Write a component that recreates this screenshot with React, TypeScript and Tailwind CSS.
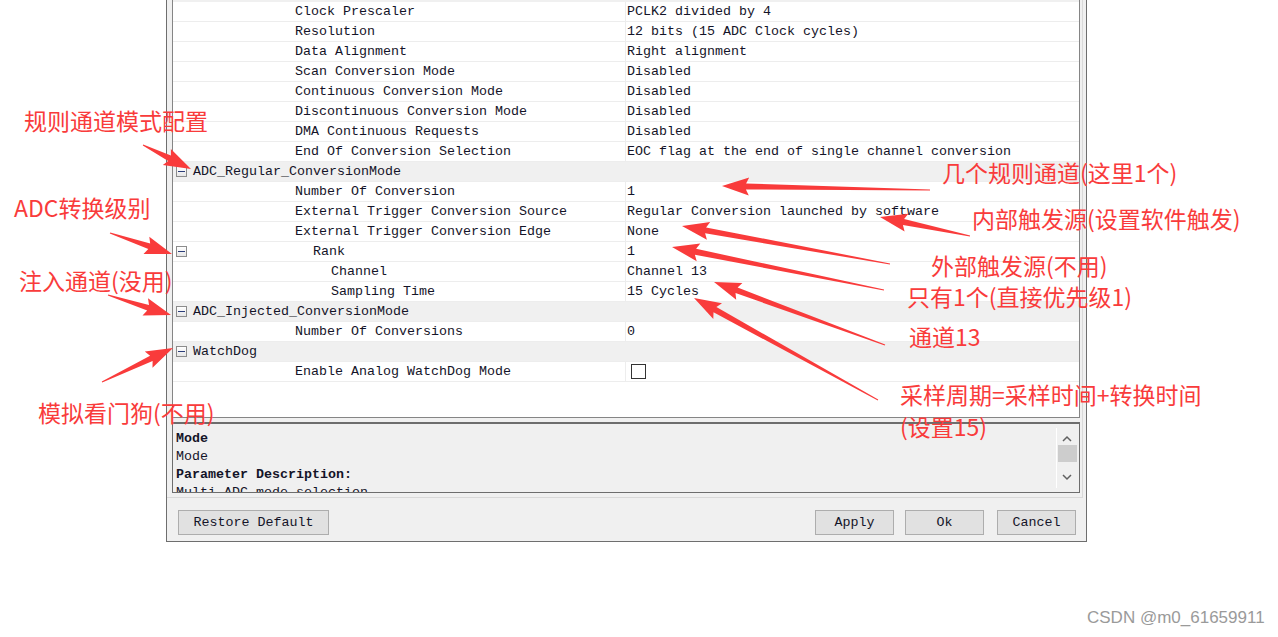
import React from 'react';

type Row = {
  label: string;
  indent: number;
  value?: string;
  group?: boolean;
  toggle?: boolean;
  checkbox?: boolean;
};

const rows: Row[] = [
  { label: 'Clock Prescaler', indent: 122, value: 'PCLK2 divided by 4' },
  { label: 'Resolution', indent: 122, value: '12 bits (15 ADC Clock cycles)' },
  { label: 'Data Alignment', indent: 122, value: 'Right alignment' },
  { label: 'Scan Conversion Mode', indent: 122, value: 'Disabled' },
  { label: 'Continuous Conversion Mode', indent: 122, value: 'Disabled' },
  { label: 'Discontinuous Conversion Mode', indent: 122, value: 'Disabled' },
  { label: 'DMA Continuous Requests', indent: 122, value: 'Disabled' },
  { label: 'End Of Conversion Selection', indent: 122, value: 'EOC flag at the end of single channel conversion' },
  { label: 'ADC_Regular_ConversionMode', indent: 20, group: true, toggle: true },
  { label: 'Number Of Conversion', indent: 122, value: '1' },
  { label: 'External Trigger Conversion Source', indent: 122, value: 'Regular Conversion launched by software' },
  { label: 'External Trigger Conversion Edge', indent: 122, value: 'None' },
  { label: 'Rank', indent: 140, value: '1', toggle: true },
  { label: 'Channel', indent: 158, value: 'Channel 13' },
  { label: 'Sampling Time', indent: 158, value: '15 Cycles' },
  { label: 'ADC_Injected_ConversionMode', indent: 20, group: true, toggle: true },
  { label: 'Number Of Conversions', indent: 122, value: '0' },
  { label: 'WatchDog', indent: 20, group: true, toggle: true },
  { label: 'Enable Analog WatchDog Mode', indent: 122, checkbox: true },
];

// annotation arrows: tail -> tip
const arrows: [number, number, number, number][] = [
  [143, 145, 191, 169],
  [110, 233, 172, 254],
  [108, 295, 171, 315],
  [102, 382, 173, 348],
  [930, 190, 722, 186],
  [970, 236, 880, 217],
  [890, 264, 682, 226],
  [884, 290, 672, 247],
  [885, 345, 714, 282],
  [878, 400, 694, 298],
];

const notes: { text: string; x: number; y: number }[] = [
  { text: '规则通道模式配置', x: 24, y: 121 },
  { text: 'ADC转换级别', x: 14, y: 208 },
  { text: '注入通道(没用)', x: 19, y: 281 },
  { text: '模拟看门狗(不用)', x: 38, y: 413 },
  { text: '几个规则通道(这里1个)', x: 942, y: 173 },
  { text: '内部触发源(设置软件触发)', x: 972, y: 219 },
  { text: '外部触发源(不用)', x: 931, y: 266 },
  { text: '只有1个(直接优先级1)', x: 907, y: 297 },
  { text: '通道13', x: 909, y: 337 },
  { text: '采样周期=采样时间+转换时间', x: 900, y: 395 },
  { text: '(设置15)', x: 900, y: 427 },
];

function arrowPoints(x1: number, y1: number, x2: number, y2: number) {
  const dx = x2 - x1;
  const dy = y2 - y1;
  const len = Math.sqrt(dx * dx + dy * dy);
  const ux = dx / len;
  const uy = dy / len;
  const nx = -uy;
  const ny = ux;
  const head = 24;
  const bx = x2 - ux * head;
  const by = y2 - uy * head;
  const pts: [number, number][] = [
    [x1 + nx * 0.5, y1 + ny * 0.5],
    [bx + nx * 3, by + ny * 3],
    [bx + nx * 9 - ux * 3, by + ny * 9 - uy * 3],
    [x2, y2],
    [bx - nx * 9 - ux * 3, by - ny * 9 - uy * 3],
    [bx - nx * 3, by - ny * 3],
    [x1 - nx * 0.5, y1 - ny * 0.5],
  ];
  return pts.map((p) => `${p[0].toFixed(1)},${p[1].toFixed(1)}`).join(' ');
}

function Toggle() {
  return (
    <span className="absolute left-[3px] top-[4px] w-[11px] h-[11px] border border-[#8c8c8c] bg-gradient-to-b from-white to-[#e6e6e6] flex items-center justify-center">
      <span className="block w-[7px] h-[1px] bg-[#2c3e7a]" />
    </span>
  );
}

function Btn({ label, w }: { label: string; w: string }) {
  return (
    <button className={`${w} h-[25px] bg-[#e1e1e1] border border-[#adadad] text-[13.33px] text-[#141428] leading-none`}>
      {label}
    </button>
  );
}

export default function App() {
  return (
    <div className="relative w-[1278px] h-[637px] bg-white overflow-hidden font-['Liberation_Mono',monospace]">
      <div className="ml-[166px] w-[921px] h-[542px] bg-[#f0f0f0] border-x border-b border-[#6e6e6e] flex flex-col">
        <div className="w-[916px] h-[498px] border-r border-b border-[#d9d9d9] pl-[5px] pr-[2px] flex flex-col">
          {/* property table */}
          <div className="w-[908px] h-[418px] bg-white border-x border-b border-[#858585] text-[13.33px] text-[#141428]">
            <div className="h-[2px] bg-[#f0f0f0]" />
            {rows.map((r, i) => (
              <div
                key={i}
                className={`relative h-[20px] flex border-b border-[#ededed] ${r.group ? 'bg-[#f0f0f0]' : ''}`}
              >
                {r.toggle && <Toggle />}
                <div className="w-[452px] shrink-0 leading-[19px] whitespace-pre" style={{ paddingLeft: r.indent }}>
                  {r.label}
                </div>
                <div className={`flex-1 leading-[19px] pl-[1px] whitespace-pre ${r.group ? '' : 'border-l border-[#ededed]'}`}>
                  {r.checkbox ? (
                    <span className="block ml-[4px] mt-[2px] w-[15px] h-[15px] border border-[#333] bg-white" />
                  ) : (
                    r.value
                  )}
                </div>
              </div>
            ))}
          </div>

          {/* description */}
          <div className="mt-[4px] w-[908px] h-[71px] border-t-2 border-x border-b border-[#6d6d6d] bg-[#f0f0f0] flex">
            <div className="flex-1 overflow-hidden pl-[3px] pt-[6px] text-[13.33px] leading-[18px] text-[#141428]">
              <div className="font-bold">Mode</div>
              <div>Mode</div>
              <div className="font-bold">Parameter Description:</div>
              <div>Multi ADC mode selection</div>
            </div>
            <div className="w-[21px] mr-[2px] my-[4px] border-l border-white flex flex-col items-center">
              <svg width="12" height="8" viewBox="0 0 12 8" className="mt-[7px]">
                <path d="M2 6 L6 2 L10 6" fill="none" stroke="#606060" strokeWidth="1.5" />
              </svg>
              <div className="mt-[2px] w-[19px] h-[17px] bg-[#cdcdcd]" />
              <svg width="12" height="8" viewBox="0 0 12 8" className="mt-[11px]">
                <path d="M2 2 L6 6 L10 2" fill="none" stroke="#606060" strokeWidth="1.5" />
              </svg>
            </div>
          </div>
        </div>

        {/* footer buttons */}
        <div className="flex items-start pt-[12px] pl-[11px] pr-[10px]">
          <Btn label="Restore Default" w="w-[151px]" />
          <div className="flex-1" />
          <Btn label="Apply" w="w-[79px]" />
          <div className="w-[11px]" />
          <Btn label="Ok" w="w-[79px]" />
          <div className="w-[13px]" />
          <Btn label="Cancel" w="w-[79px]" />
        </div>
      </div>

      {/* red annotations */}
      <svg className="absolute left-0 top-0 pointer-events-none" width="1278" height="637">
        {arrows.map((a, i) => (
          <polygon key={i} points={arrowPoints(a[0], a[1], a[2], a[3])} fill="#f93b3b" />
        ))}
      </svg>
      {notes.map((n, i) => (
        <div
          key={i}
          className="absolute whitespace-nowrap text-[23px] leading-[23px] text-[#f93b3b] font-['Noto_Sans_CJK_SC','Noto_Sans',sans-serif]"
          style={{ left: n.x, top: n.y - 12 }}
        >
          {n.text}
        </div>
      ))}

      <div className="absolute left-[1087px] top-[608px] text-[17px] leading-[20px] text-[#9a9a9a] font-['Liberation_Sans',Arial,sans-serif]">
        CSDN @m0_61659911
      </div>
    </div>
  );
}
